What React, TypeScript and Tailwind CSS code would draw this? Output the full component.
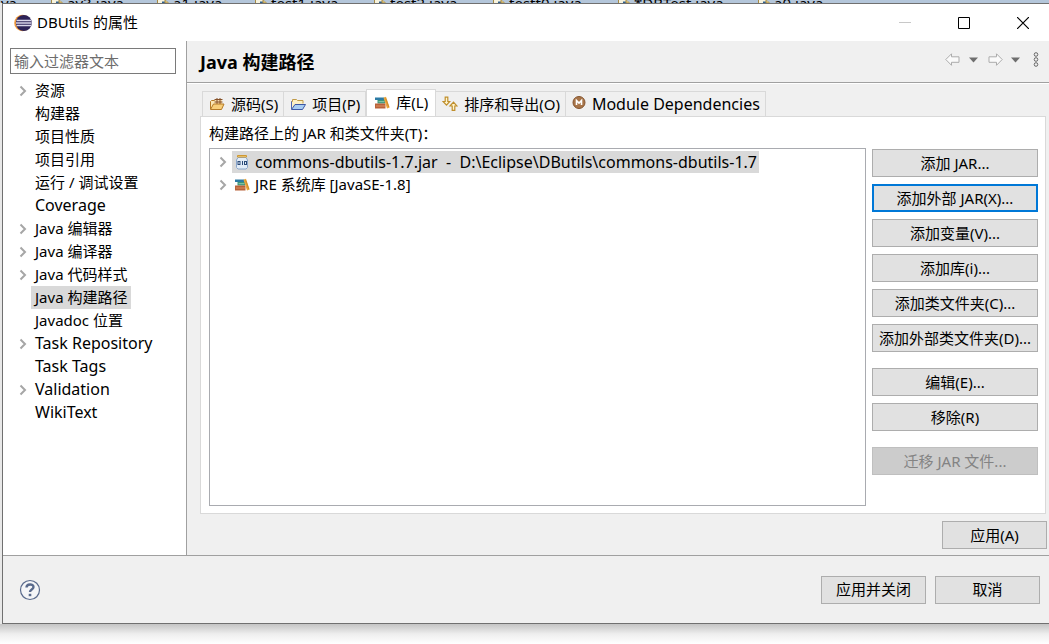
import type { ReactNode } from 'react';

type TreeNode = { label: string; open?: boolean; selected?: boolean; latin?: boolean };

const pages: TreeNode[] = [
  { label: '资源', open: true },
  { label: '构建器' },
  { label: '项目性质' },
  { label: '项目引用' },
  { label: '运行 / 调试设置' },
  { label: 'Coverage', latin: true },
  { label: 'Java 编辑器', open: true },
  { label: 'Java 编译器', open: true },
  { label: 'Java 代码样式', open: true },
  { label: 'Java 构建路径', selected: true },
  { label: 'Javadoc 位置' },
  { label: 'Task Repository', open: true, latin: true },
  { label: 'Task Tags', latin: true },
  { label: 'Validation', open: true, latin: true },
  { label: 'WikiText', latin: true },
];

const editorTabs = [
  { label: 'va', width: 'w-[50px]', icon: false },
  { label: 'av3.java', width: 'w-[106px]', icon: true },
  { label: 'a1.java', width: 'w-[98px]', icon: true },
  { label: 'test1.java', width: 'w-[119px]', icon: true },
  { label: 'test2.java', width: 'w-[119px]', icon: true },
  { label: 'testt0.java', width: 'w-[125px]', icon: true },
  { label: '*DBTest.java', width: 'w-[140px]', icon: true },
  { label: 'a0.java', width: 'w-[120px]', icon: true },
];

function Chevron() {
  return (
    <svg width="8" height="12" viewBox="0 0 8 12" fill="none" stroke="#a6a6a6" strokeWidth="2">
      <path d="M1.500 1.500 6 6l-4.500 4.500" />
    </svg>
  );
}

function EclipseIcon() {
  return (
    <svg width="18" height="18" viewBox="0 0 18 18">
      <circle cx="8.500" cy="9" r="8.300" fill="#f39a38" />
      <circle cx="9.800" cy="9" r="8" fill="#2d2358" />
      <path d="M2.500 6.500h14.500M2 9h15.500M2.500 11.500h14.500" stroke="#d9d6ea" strokeWidth="1.400" />
    </svg>
  );
}

function SourceIcon() {
  return (
    <svg width="16" height="16" viewBox="0 0 16 16">
      <path d="M1.500 13V5.500l1-1h3l1 1h6v3" fill="#fbe7b5" stroke="#b47a26" />
      <path d="M6 3.500h7v5H6z" fill="#f6dcae" />
      <path d="M8 2v6.500M11 2v6.500M5.500 3.500h8M5.500 6h8" stroke="#855027" />
      <path d="m1.500 13.500 3-5.500h10.500l-2.500 5.500z" fill="#f8cf7a" stroke="#b47a26" />
    </svg>
  );
}

function ProjectIcon() {
  return (
    <svg width="16" height="16" viewBox="0 0 16 16">
      <path d="M1.500 13V5.500h1v-2h4l1 1h5.500v3" fill="#fdf0c4" stroke="#c09a48" />
      <path d="M1.500 13V5.500" stroke="#4d66b0" />
      <path d="m1.500 13.500 3.500-5h10.500l-3 5z" fill="#a9cdf2" stroke="#3c57a6" />
    </svg>
  );
}

function LibraryIcon() {
  return (
    <svg width="16" height="16" viewBox="0 0 16 16">
      <path d="M1 2.500h9.500v2.500H1z" fill="#2c7ba5" />
      <path d="M3.500 5h7.500v3.500H3.500z" fill="#3b9478" />
      <path d="M4.500 6.700h6" stroke="#8ecab0" />
      <path d="M1 8.500h10.500v5H1z" fill="#b9623a" />
      <path d="M2 11h9" stroke="#dd905f" />
      <path d="m9.500 2.800 2.500-1 3.700 10.700-2.700 1z" fill="#eba63a" />
      <path d="m11.700 3.500 3 8.500" stroke="#cf8a2c" />
    </svg>
  );
}

function OrderIcon() {
  return (
    <svg width="16" height="16" viewBox="0 0 16 16" fill="#fff5cf" stroke="#c08f2c" strokeWidth="1.200">
      <path d="M3.200 1.200h2.600v4.300h1.900L4.500 9.200 1 5.500h2.200z" />
      <path d="M10.200 14.300h2.600v-4.300H15l-3.500-3.800L8 10h2.200z" />
    </svg>
  );
}

function ModuleIcon() {
  return (
    <svg width="14" height="16" viewBox="0 0 14 16">
      <circle cx="7" cy="6.500" r="6" fill="#a87549" stroke="#84532d" />
      <path d="M4.500 9V4.500L7 7l2.500-2.500V9" fill="none" stroke="#fff" strokeWidth="1.600" />
    </svg>
  );
}

function JarIcon() {
  return (
    <svg width="14" height="16" viewBox="0 0 14 16">
      <path d="M3 3.500h8l1.500 2.500v7.500l-1.500 1.500h-8l-1.500-1.500V6z" fill="#e3edf8" stroke="#8aa7cc" />
      <path d="M2.500 1.500h9v1.500h-9z" fill="#fbe39a" stroke="#cf9832" />
      <rect x="3" y="7.500" width="2" height="3" fill="none" stroke="#2c4b78" />
      <path d="M7.500 7v4" stroke="#2c4b78" />
      <rect x="9.500" y="7.500" width="2" height="3" fill="none" stroke="#2c4b78" />
    </svg>
  );
}

function JavaFileIcon() {
  return (
    <svg width="12" height="14" viewBox="0 0 12 14">
      <path d="M.5 0v13.500h11V3L8 0" fill="#f7f3de" stroke="#a58a45" />
      <path d="M6.500 1.500v9" fill="none" stroke="#2f6191" strokeWidth="3" />
      <path d="M8 0v3h3.500" fill="#e4c983" stroke="#a58a45" />
    </svg>
  );
}

function Tab({ icon, children, active = false, className = '' }: { icon: ReactNode; children: ReactNode; active?: boolean; className?: string }) {
  return (
    <button
      type="button"
      role="tab"
      aria-selected={active}
      className={`flex items-center whitespace-nowrap ${
        active
          ? '-mb-px h-[28px] gap-1.5 border border-b-0 border-[#d9d9d9] bg-white px-[7px] pb-0.5'
          : 'h-[25px] gap-1.5 border-t border-r border-[#d9d9d9] bg-[#f0f0f0] pr-[5px] pl-1.5 first:border-l'
      } ${className}`}
    >
      {icon}
      {children}
    </button>
  );
}

function PushButton({ children, focused = false, disabled = false, className = 'w-full' }: { children: ReactNode; focused?: boolean; disabled?: boolean; className?: string }) {
  const tone = disabled
    ? 'border border-[#bfbfbf] bg-[#cccccc] text-[#838383]'
    : focused
      ? 'border-2 border-[#0078d7] bg-[#e1e1e1]'
      : 'border border-[#adadad] bg-[#e1e1e1]';
  return (
    <button type="button" disabled={disabled} className={`flex h-[28px] shrink-0 items-center justify-center whitespace-nowrap ${tone} ${className}`}>
      {children}
    </button>
  );
}

function EditorStrip() {
  return (
    <div className="flex h-[3px] overflow-hidden bg-[#b4c6da] pl-px">
      {editorTabs.map((tab) => (
        <div key={tab.label} className={`flex h-[14px] shrink-0 items-start gap-1 ${tab.width}`}>
          {tab.icon && <JavaFileIcon />}
          <span className="text-[15px] leading-[6px]">{tab.label}</span>
        </div>
      ))}
    </div>
  );
}

function TitleBar() {
  return (
    <header className="flex h-[37px] items-center gap-[47px] bg-white pr-5 pl-[11px]">
      <div className="flex flex-1 items-center gap-[5px]">
        <EclipseIcon />
        <h1>DBUtils 的属性</h1>
      </div>
      <button type="button" aria-label="最小化">
        <svg width="12" height="12" stroke="#c8c8c8"><path d="M0 5.500h12" /></svg>
      </button>
      <button type="button" aria-label="最大化">
        <svg width="12" height="12" fill="none" stroke="#000"><path d="M.5.5h11v11H.5z" /></svg>
      </button>
      <button type="button" aria-label="关闭">
        <svg width="12" height="12" stroke="#000" strokeWidth="1.200"><path d="m0 0 12 12M12 0 0 12" /></svg>
      </button>
    </header>
  );
}

function Sidebar() {
  return (
    <nav className="w-[184px] shrink-0 border-r border-[#a0a0a0] bg-white pt-[7px]">
      <input
        type="text"
        aria-label="输入过滤器文本"
        placeholder="输入过滤器文本"
        className="mr-2.5 ml-[7px] block h-[26px] w-[166px] border border-[#7a7a7a] px-[3px] placeholder:text-[#6d6d6d]"
      />
      <ul className="mt-[5px]">
        {pages.map((page) => (
          <li key={page.label} className="flex h-[23px] items-center pl-4">
            <span className="w-3">{page.open && <Chevron />}</span>
            <span className={`px-1 leading-[23px] ${page.selected ? 'bg-[#d9d9d9]' : ''} ${page.latin ? 'text-[16px]' : ''}`}>{page.label}</span>
          </li>
        ))}
      </ul>
    </nav>
  );
}

function Caret() {
  return <svg width="9" height="6" fill="#6e6e6e"><path d="M0 .5h9L4.500 5.500z" /></svg>;
}

function PageHeader() {
  return (
    <div className="flex h-[42px] items-center border-b border-[#a0a0a0] pr-2.5 pl-[13px]">
      <h2 className="flex-1 text-[18px] leading-6 font-bold">Java 构建路径</h2>
      <div className="mb-1 flex items-center">
        <button type="button" aria-label="后退" className="mr-[9px]">
          <svg width="15" height="13" fill="#fafafa" stroke="#ababab"><path d="M.8 6.500 6.500.8v3h7.500v5.500H6.500v3z" /></svg>
        </button>
        <button type="button" aria-label="后退历史" className="mr-2.5"><Caret /></button>
        <button type="button" aria-label="前进" className="mr-2">
          <svg width="15" height="13" fill="#fafafa" stroke="#ababab"><path d="M14.200 6.500 8.500.8v3H1v5.500h7.500v3z" /></svg>
        </button>
        <button type="button" aria-label="前进历史" className="mr-[13px]"><Caret /></button>
        <button type="button" aria-label="菜单">
          <svg width="6" height="15" fill="none" stroke="#666">
            <circle cx="3" cy="2.500" r="1.800" />
            <circle cx="3" cy="7.500" r="1.800" />
            <circle cx="3" cy="12.500" r="1.800" />
          </svg>
        </button>
      </div>
    </div>
  );
}

function LibraryPanel() {
  return (
    <div className="flex flex-1 gap-1.5 border border-[#d9d9d9] bg-white pt-[5px] pr-[7px] pb-[7px] pl-2">
      <div className="flex flex-1 flex-col">
        <p id="entries" className="h-[26px] leading-[23px]">构建路径上的 JAR 和类文件夹(T)：</p>
        <ul aria-labelledby="entries" className="flex-1 border border-[#a9abb0] pt-px pl-[9px]">
          <li className="flex h-[23px] items-center">
            <span className="w-[13px]"><Chevron /></span>
            <span className="flex h-[22px] items-center gap-1.5 bg-[#d9d9d9] pr-0.5 pl-[3px] text-[16px] whitespace-pre">
              <JarIcon />
              {'commons-dbutils-1.7.jar  -  D:\\Eclipse\\DButils\\commons-dbutils-1.7'}
            </span>
          </li>
          <li className="flex h-[23px] items-center">
            <span className="w-[13px]"><Chevron /></span>
            <span className="flex items-center gap-[5px] pl-0.5">
              <LibraryIcon />
              JRE 系统库 [JavaSE-1.8]
            </span>
          </li>
        </ul>
      </div>
      <div className="mt-[27px] flex w-[166px] flex-col gap-[7px]">
        <PushButton>添加 JAR...</PushButton>
        <PushButton focused>添加外部 JAR(X)...</PushButton>
        <PushButton>添加变量(V)...</PushButton>
        <PushButton>添加库(i)...</PushButton>
        <PushButton>添加类文件夹(C)...</PushButton>
        <PushButton>添加外部类文件夹(D)...</PushButton>
        <PushButton className="mt-[9px] w-full">编辑(E)...</PushButton>
        <PushButton>移除(R)</PushButton>
        <PushButton className="mt-[9px] w-full" disabled>迁移 JAR 文件...</PushButton>
      </div>
    </div>
  );
}

export default function App() {
  return (
    <div className="flex min-h-screen flex-col bg-white font-['Noto_Sans','Noto_Sans_CJK_SC',sans-serif] text-[15px] text-black">
      <EditorStrip />
      <div className="flex flex-1 bg-[#e8e8e8] pl-0.5">
        <main className="flex flex-1 flex-col border-t border-b border-l border-[#707070] bg-[#f0f0f0]">
          <TitleBar />
          <div className="flex flex-1">
            <Sidebar />
            <section className="flex flex-1 flex-col">
              <PageHeader />
              <div className="flex flex-1 flex-col border-t border-white pt-[5px] pr-[3px] pl-[13px]">
                <div role="tablist" className="flex items-end pl-0.5">
                  <Tab icon={<SourceIcon />}>源码(S)</Tab>
                  <Tab icon={<ProjectIcon />}>项目(P)</Tab>
                  <Tab icon={<LibraryIcon />} active>库(L)</Tab>
                  <Tab icon={<OrderIcon />}>排序和导出(O)</Tab>
                  <Tab icon={<ModuleIcon />} className="text-[16px]">Module Dependencies</Tab>
                </div>
                <LibraryPanel />
              </div>
              <div className="flex justify-end pt-[7px] pr-0.5 pb-1.5">
                <PushButton className="w-[105px]">应用(A)</PushButton>
              </div>
            </section>
          </div>
          <footer className="flex h-[68px] items-center gap-[9px] border-t border-[#a0a0a0] pr-[9px] pl-4">
            <button type="button" aria-label="帮助" className="mr-auto">
              <svg width="22" height="22" viewBox="0 0 22 22" fill="none" stroke="#596a8c">
                <circle cx="11" cy="11" r="9.500" fill="#f4f5f7" strokeWidth="1.200" />
                <path d="M7.500 8.500c0-4 7-4 7-.5 0 2.500-3.500 2.500-3.500 5" strokeWidth="2.400" />
                <path d="M11 14.800v2.400" strokeWidth="2.600" />
              </svg>
            </button>
            <PushButton className="w-[105px]">应用并关闭</PushButton>
            <PushButton className="w-[105px]">取消</PushButton>
          </footer>
        </main>
      </div>
      <div className="h-5 bg-linear-to-b from-[#c4c4c4] via-[#eeeeee] to-white" />
    </div>
  );
}
